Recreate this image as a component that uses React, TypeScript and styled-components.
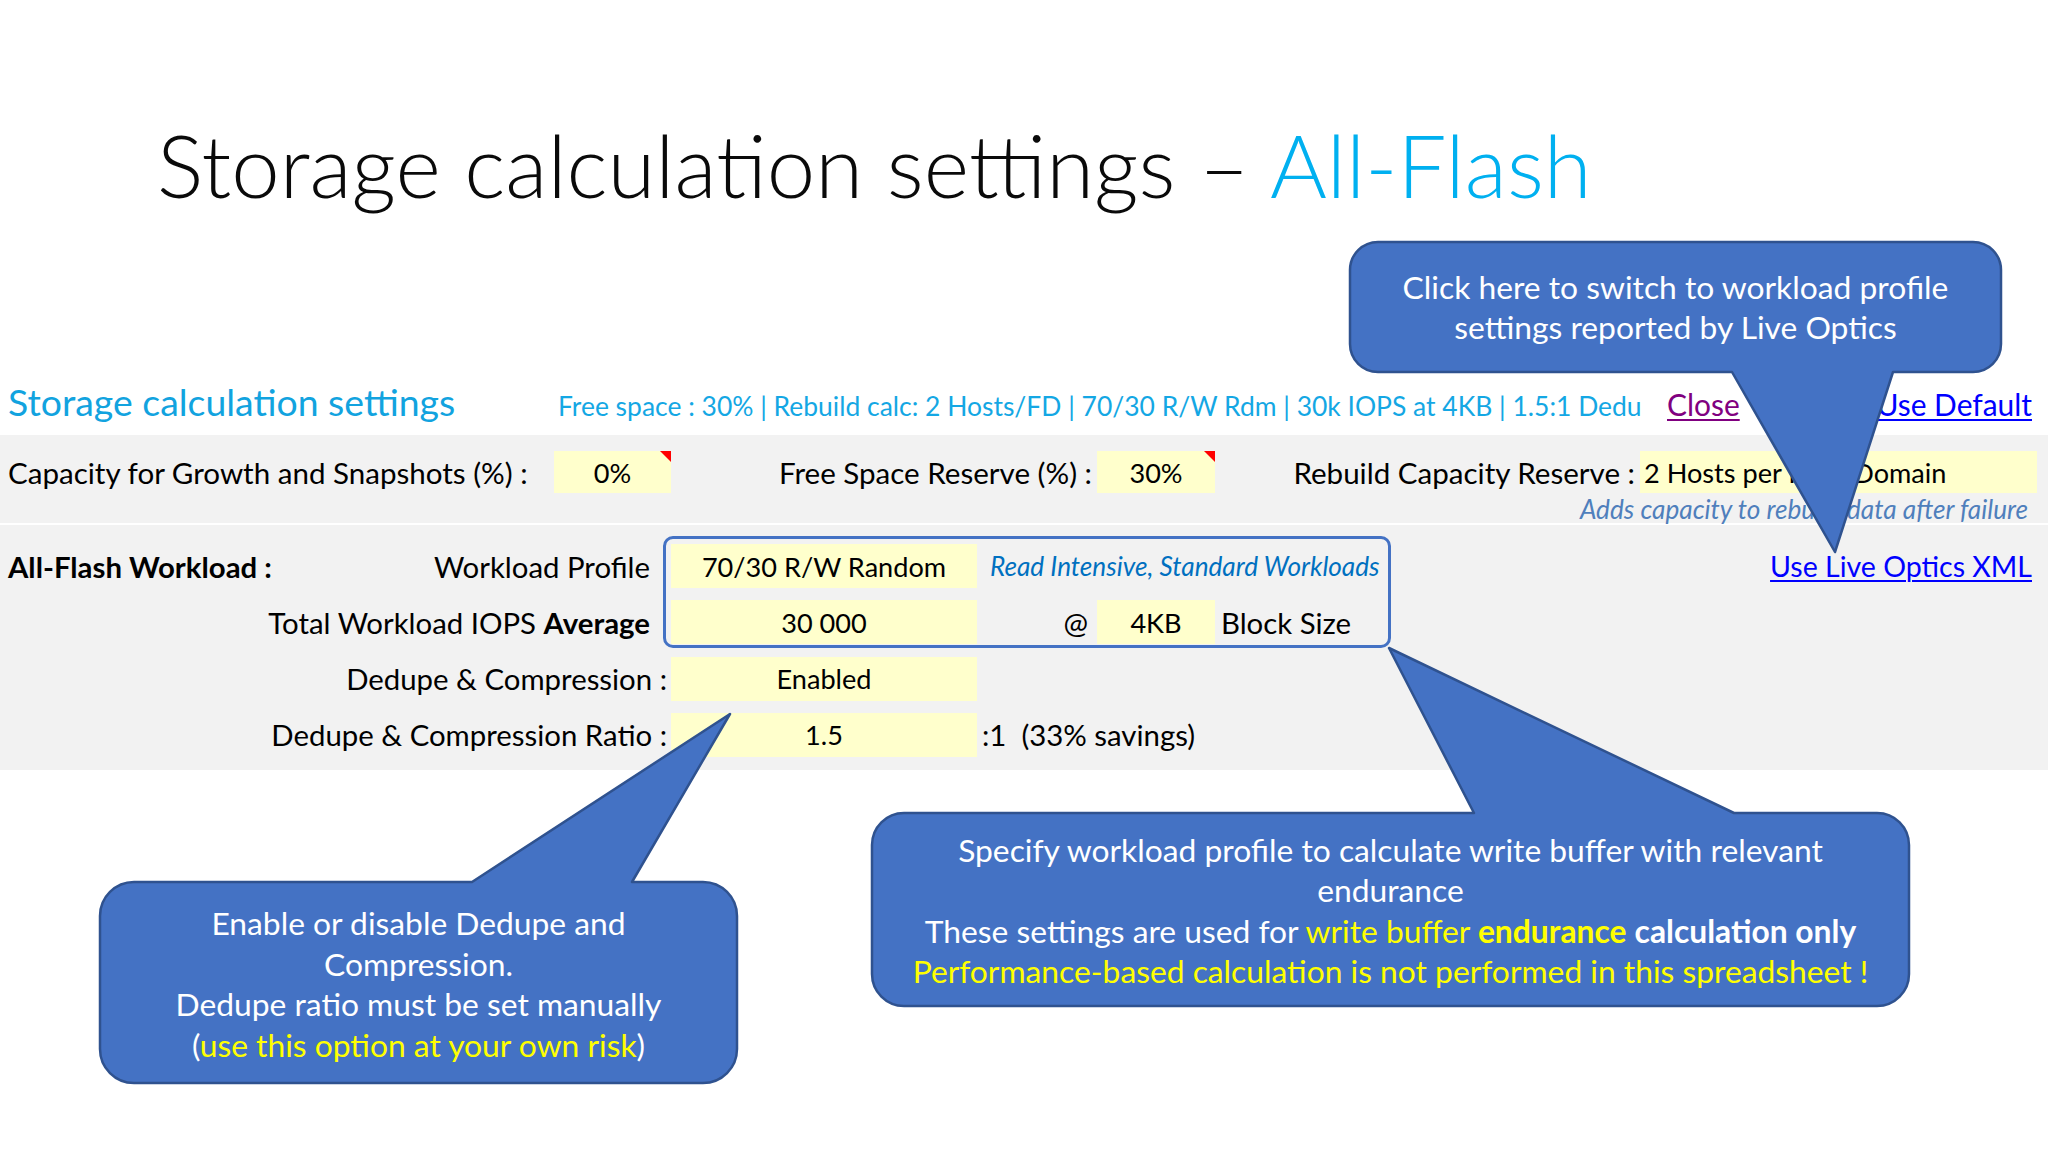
import React from "react";
import styled, { createGlobalStyle, css } from "styled-components";

const R = 0.935;
const fs = (c: number) => `${(c * R).toFixed(2)}px`;

const GlobalStyle = createGlobalStyle`
  html, body { margin: 0; padding: 0; background: #ffffff; }
  body { font-family: Lato, "Open Sans", "Noto Sans", sans-serif; color: #000; }
`;

const Slide = styled.main`
  position: relative;
  width: 2048px;
  height: 1152px;
  overflow: hidden;
  background: #fff;
  display: flex;
  flex-direction: column;
`;

const TitleBar = styled.header`
  height: 380px;
  box-sizing: border-box;
  padding: 115px 0 0 157px;
`;

const Title = styled.h1`
  margin: 0;
  font-weight: 300;
  font-size: ${fs(93)};
  line-height: 100px;
  color: #0a0a0a;
  white-space: nowrap;
`;

const Accent = styled.span`
  color: #00b0f0;
`;

const SheetHeader = styled.div`
  height: 55px;
  display: flex;
  align-items: baseline;
  line-height: 1.2;
  white-space: nowrap;
`;

const SheetTitle = styled.div`
  width: 558px;
  flex: none;
  box-sizing: border-box;
  padding-left: 8px;
  font-size: ${fs(40)};
  color: #12a3df;
`;

const Summary = styled.div`
  width: 1109px;
  flex: none;
  font-size: ${fs(28.3)};
  color: #14a7e4;
`;

const Link = styled.a<{ $visited?: boolean; $push?: boolean; $small?: boolean }>`
  font-size: ${(p) => (p.$small ? fs(30.5) : fs(32))};
  color: ${(p) => (p.$visited ? "#800080" : "#0000ff")};
  text-decoration: underline;
  text-decoration-thickness: 2px;
  text-underline-offset: 3px;
  cursor: pointer;
  ${(p) =>
    p.$push &&
    css`
      margin-left: auto;
      margin-right: 16px;
    `}
`;

const Panel = styled.section`
  background: #f2f2f2;
  display: flex;
  flex-direction: column;
`;

const ReserveBlock = styled.div`
  height: 90px;
  box-sizing: border-box;
  border-bottom: 2px solid #ffffff;
  padding-top: 16px;
  display: flex;
  flex-direction: column;
`;

const ReserveRow = styled.div`
  height: 43px;
  display: flex;
  align-items: center;
  font-size: ${fs(31.6)};
  white-space: nowrap;
`;

const FieldLabel = styled.div<{ $w: number; $align: "left" | "right" }>`
  width: ${(p) => p.$w}px;
  flex: none;
  box-sizing: border-box;
  text-align: ${(p) => p.$align};
  padding: ${(p) => (p.$align === "left" ? "0 0 0 8px" : "0 5px 0 0")};
`;

const InputCell = styled.div<{ $w: number; $left?: boolean; $flag?: boolean }>`
  position: relative;
  flex: none;
  width: ${(p) => p.$w}px;
  height: 100%;
  box-sizing: border-box;
  background: #ffffcc;
  font-size: ${fs(29)};
  display: flex;
  align-items: center;
  justify-content: ${(p) => (p.$left ? "flex-start" : "center")};
  padding-left: ${(p) => (p.$left ? "4px" : "0")};
  ${(p) =>
    p.$flag &&
    css`
      &::after {
        content: "";
        position: absolute;
        top: 0;
        right: 0;
        border-top: 11px solid #ff0000;
        border-left: 11px solid transparent;
      }
    `}
`;

const Note = styled.div`
  height: 30px;
  line-height: 33px;
  text-align: right;
  padding-right: 20px;
  font-size: ${fs(28)};
  font-style: italic;
  color: #4f7fbc;
  white-space: nowrap;
`;

const WorkloadGrid = styled.div`
  display: grid;
  grid-template-columns: 671px 306px 120px 118px 176px 1fr;
  grid-template-rows: repeat(4, 44px);
  row-gap: 12.33px;
  padding: 19px 0 13px;
  font-size: ${fs(31.4)};
  white-space: nowrap;
`;

type Justify = "start" | "end" | "between" | "center";
const justifyMap: Record<Justify, string> = {
  start: "flex-start",
  end: "flex-end",
  between: "space-between",
  center: "center",
};

const GridCell = styled.div<{
  $row: number;
  $col: string;
  $justify?: Justify;
  $pl?: number;
  $pr?: number;
}>`
  grid-row: ${(p) => p.$row};
  grid-column: ${(p) => p.$col};
  display: flex;
  align-items: center;
  min-width: 0;
  justify-content: ${(p) => justifyMap[p.$justify ?? "start"]};
  padding-left: ${(p) => p.$pl ?? 0}px;
  padding-right: ${(p) => p.$pr ?? 0}px;
`;

const GridInput = styled(GridCell)`
  background: #ffffcc;
  justify-content: center;
  font-size: ${fs(29)};
`;

const ProfileFrame = styled.div`
  grid-row: 1 / 3;
  grid-column: 2 / 6;
  margin: -8px 0 -4px -8px;
  border: 3px solid #4472c4;
  border-radius: 10px;
  pointer-events: none;
  z-index: 1;
`;

const Hint = styled.span`
  font-size: ${fs(28)};
  font-style: italic;
  color: #0070c0;
`;

const Bold = styled.b`
  font-weight: 700;
`;

const Preserve = styled.span`
  white-space: pre;
`;

const Overlay = styled.svg`
  position: absolute;
  left: 0;
  top: 0;
  width: 2048px;
  height: 1152px;
  pointer-events: none;
`;

const CalloutText = styled.div<{ $x: number; $y: number; $w: number; $h: number; $shift?: number }>`
  position: absolute;
  left: ${(p) => p.$x}px;
  top: ${(p) => p.$y}px;
  width: ${(p) => p.$w}px;
  height: ${(p) => p.$h}px;
  box-sizing: border-box;
  padding-top: ${(p) => p.$shift ?? 0}px;
  display: flex;
  flex-direction: column;
  justify-content: center;
  align-items: center;
  text-align: center;
  color: #ffffff;
  font-size: ${fs(34)};
  line-height: 40.5px;
  white-space: nowrap;
`;

const Line = styled.div``;

const Hi = styled.span<{ $bold?: boolean }>`
  color: #ffff00;
  font-weight: ${(p) => (p.$bold ? 700 : 400)};
`;

const callouts = [
  "M1378,242 H1973 A28,28 0 0 1 2001,270 V344 A28,28 0 0 1 1973,372 H1893 L1835,552 L1732,372 H1378 A28,28 0 0 1 1350,344 V270 A28,28 0 0 1 1378,242 Z",
  "M134,882 H472 L730,714 L632,882 H703 A34,34 0 0 1 737,916 V1049 A34,34 0 0 1 703,1083 H134 A34,34 0 0 1 100,1049 V916 A34,34 0 0 1 134,882 Z",
  "M904,813 H1474 L1389,648 L1734,813 H1877 A32,32 0 0 1 1909,845 V974 A32,32 0 0 1 1877,1006 H904 A32,32 0 0 1 872,974 V845 A32,32 0 0 1 904,813 Z",
];

export default function App() {
  return (
    <>
      <GlobalStyle />
      <Slide>
        <TitleBar>
          <Title>
            Storage calculation settings – <Accent>All-Flash</Accent>
          </Title>
        </TitleBar>

        <SheetHeader>
          <SheetTitle>Storage calculation settings</SheetTitle>
          <Summary>
            Free space : 30% | Rebuild calc: 2 Hosts/FD | 70/30 R/W Rdm | 30k IOPS at 4KB | 1.5:1 Dedu
          </Summary>
          <Link $visited>Close</Link>
          <Link $push>Use Default</Link>
        </SheetHeader>

        <Panel>
          <ReserveBlock>
            <ReserveRow>
              <FieldLabel $w={554} $align="left">
                Capacity for Growth and Snapshots (%) :
              </FieldLabel>
              <InputCell $w={117} $flag>
                0%
              </InputCell>
              <FieldLabel $w={426} $align="right">
                Free Space Reserve (%) :
              </FieldLabel>
              <InputCell $w={118} $flag>
                30%
              </InputCell>
              <FieldLabel $w={425} $align="right">
                Rebuild Capacity Reserve :
              </FieldLabel>
              <InputCell $w={397} $left>
                2 Hosts per Fault Domain
              </InputCell>
            </ReserveRow>
            <Note>Adds capacity to rebuild data after failure</Note>
          </ReserveBlock>

          <WorkloadGrid>
            <GridCell $row={1} $col="1" $justify="between" $pl={8} $pr={21}>
              <Bold>All-Flash Workload :</Bold>
              <span>Workload Profile</span>
            </GridCell>
            <GridInput $row={1} $col="2">70/30 R/W Random</GridInput>
            <GridCell $row={1} $col="3 / 6" $pl={13}>
              <Hint>Read Intensive, Standard Workloads</Hint>
            </GridCell>
            <GridCell $row={1} $col="6" $justify="end" $pr={16}>
              <Link $small>Use Live Optics XML</Link>
            </GridCell>

            <GridCell $row={2} $col="1" $justify="end" $pr={21}>
              <span>
                Total Workload IOPS <Bold>Average</Bold>
              </span>
            </GridCell>
            <GridInput $row={2} $col="2">30 000</GridInput>
            <GridCell $row={2} $col="3" $justify="end" $pr={9}>
              @
            </GridCell>
            <GridInput $row={2} $col="4">4KB</GridInput>
            <GridCell $row={2} $col="5" $pl={6}>
              Block Size
            </GridCell>

            <GridCell $row={3} $col="1" $justify="end" $pr={4}>
              Dedupe &amp; Compression :
            </GridCell>
            <GridInput $row={3} $col="2">Enabled</GridInput>

            <GridCell $row={4} $col="1" $justify="end" $pr={4}>
              Dedupe &amp; Compression Ratio :
            </GridCell>
            <GridInput $row={4} $col="2">1.5</GridInput>
            <GridCell $row={4} $col="3 / 7" $pl={5}>
              <Preserve>:1  (33% savings)</Preserve>
            </GridCell>

            <ProfileFrame />
          </WorkloadGrid>
        </Panel>

        <Overlay viewBox="0 0 2048 1152">
          {callouts.map((d, i) => (
            <path key={i} d={d} fill="#4472c4" stroke="#2f528f" strokeWidth={2.5} strokeLinejoin="round" />
          ))}
        </Overlay>

        <CalloutText $x={1350} $y={242} $w={651} $h={130}>
          <Line>Click here to switch to workload profile</Line>
          <Line>settings reported by Live Optics</Line>
        </CalloutText>

        <CalloutText $x={100} $y={882} $w={637} $h={201} $shift={3}>
          <Line>Enable or disable Dedupe and</Line>
          <Line>Compression.</Line>
          <Line>Dedupe ratio must be set manually</Line>
          <Line>
            (<Hi>use this option at your own risk</Hi>)
          </Line>
        </CalloutText>

        <CalloutText $x={872} $y={813} $w={1037} $h={193} $shift={2}>
          <Line>Specify workload profile to calculate write buffer with relevant</Line>
          <Line>endurance</Line>
          <Line>
            These settings are used for <Hi>write buffer </Hi>
            <Hi $bold>endurance</Hi> <Bold>calculation only</Bold>
          </Line>
          <Line>
            <Hi>Performance-based calculation is not performed in this spreadsheet !</Hi>
          </Line>
        </CalloutText>
      </Slide>
    </>
  );
}
